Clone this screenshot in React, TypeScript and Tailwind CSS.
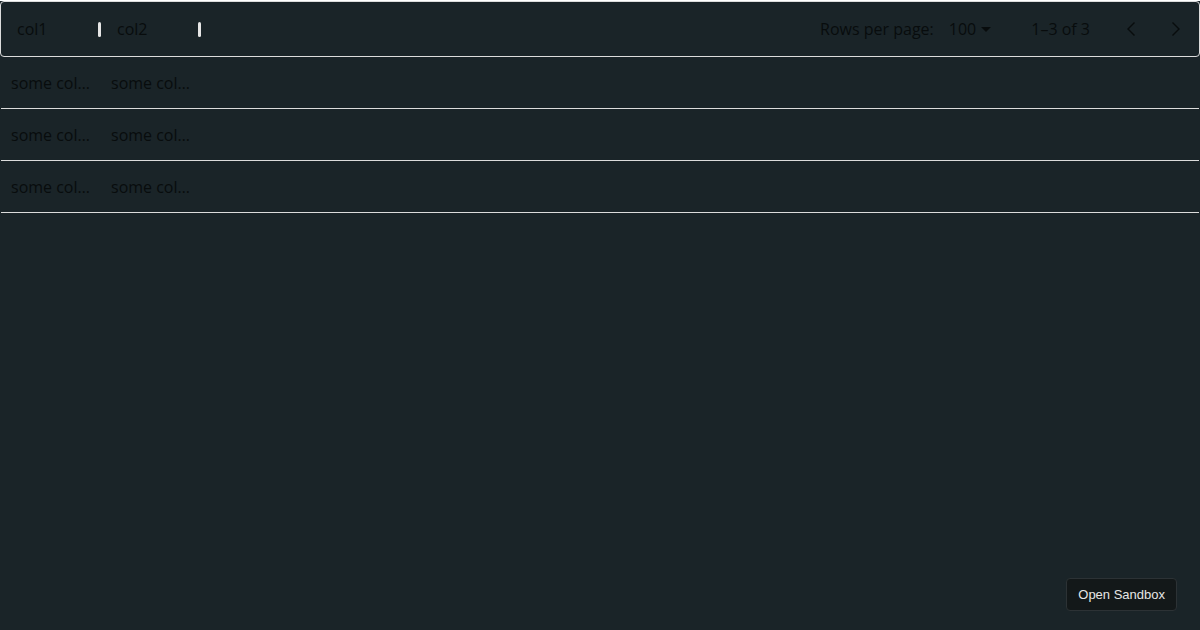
import React from "react";

const columns = ["col1", "col2"];
const rows = [
  ["some column value", "some column value"],
  ["some column value", "some column value"],
  ["some column value", "some column value"],
];

const ChevronLeft = () => (
  <svg width="10" height="16" viewBox="0 0 10 16" fill="none">
    <path d="M8.5 1.5 2 8l6.5 6.5" stroke="currentColor" strokeWidth="1.4" />
  </svg>
);

const ChevronRight = () => (
  <svg width="10" height="16" viewBox="0 0 10 16" fill="none">
    <path d="M1.5 1.5 8 8l-6.5 6.5" stroke="currentColor" strokeWidth="1.4" />
  </svg>
);

export default function App() {
  return (
    <div
      className="min-h-[630px] w-full bg-[#1a2428] text-[#080c0d]"
      style={{ fontFamily: '"Open Sans", sans-serif' }}
    >
      {/* En-tête avec colonnes et pagination */}
      <div className="mt-px flex h-[56px] items-center rounded-[4px] border border-[#dcdcdc]">
        {columns.map((col) => (
          <div key={col} className="flex h-full w-[100px] items-center justify-between pl-4 pr-0">
            <span className="text-[16px]">{col}</span>
            <span className="h-[15px] w-[3px] rounded-sm bg-[#e6e6e6]" />
          </div>
        ))}
        <div className="ml-auto flex items-center text-[16px]">
          <span>Rows per page:</span>
          <div className="ml-[15px] flex items-center">
            <span>100</span>
            <svg width="10" height="6" viewBox="0 0 10 6" className="ml-[5px] mt-px">
              <path d="M0 0h10L5 5z" fill="currentColor" />
            </svg>
          </div>
          <span className="ml-[40px]">1–3 of 3</span>
          <div className="ml-[36px] flex items-center">
            <span className="flex w-[10px] justify-center">
              <ChevronLeft />
            </span>
            <span className="ml-[35px] mr-[18px] flex w-[10px] justify-center">
              <ChevronRight />
            </span>
          </div>
        </div>
      </div>

      {/* Lignes du tableau */}
      <div className="mx-px">
        {rows.map((row, i) => (
          <div key={i} className="flex h-[52px] items-center border-b border-[#dcdcdc]">
            {row.map((cell, j) => (
              <div key={j} className="w-[100px] truncate px-[10px] text-[16px]">
                {cell}
              </div>
            ))}
          </div>
        ))}
      </div>

      <button
        className="fixed bottom-[19px] right-[23px] h-[33px] rounded-[4px] border border-[#2c3235] bg-[#131819] px-[11px] text-[13px] text-[#e6e6e6]"
        style={{ fontFamily: '"Liberation Sans", Arial, sans-serif' }}
      >
        Open Sandbox
      </button>
    </div>
  );
}
